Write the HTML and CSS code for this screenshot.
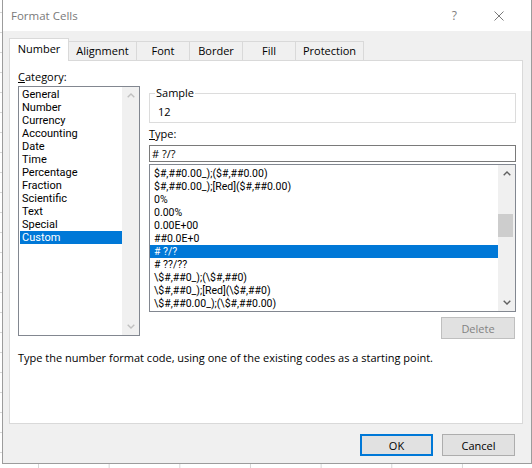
FILE: index.html
```html
<!DOCTYPE html>
<html>
<head>
<meta charset="utf-8">
<title>Format Cells</title>
<link rel="stylesheet" href="styles.css">
</head>
<body>
<div class="dialog">
  <div class="titlebar">
    <span class="title">Format Cells</span>
    <span class="help">?</span>
    <svg class="close" width="10" height="10" viewBox="0 0 10 10"><path d="M0.5 0.5 L9.5 9.5 M9.5 0.5 L0.5 9.5" stroke="#7a7a7a" stroke-width="1" fill="none"/></svg>
  </div>
  <div class="client">
    <div class="tabs">
      <div class="tab active">Number</div>
      <div class="tab wide">Alignment</div>
      <div class="tab">Font</div>
      <div class="tab">Border</div>
      <div class="tab">Fill</div>
      <div class="tab wide">Protection</div>
    </div>
    <div class="panel">
      <div class="cols">
        <div class="catcol">
          <div class="label"><u>C</u>ategory:</div>
          <div class="listbox cat">
            <ul class="items">
              <li>General</li>
              <li>Number</li>
              <li>Currency</li>
              <li>Accounting</li>
              <li>Date</li>
              <li>Time</li>
              <li>Percentage</li>
              <li>Fraction</li>
              <li>Scientific</li>
              <li>Text</li>
              <li>Special</li>
              <li class="sel">Custom</li>
            </ul>
            <div class="vscroll disabled">
              <div class="arrow"><svg width="8" height="5" viewBox="0 0 8 5"><path d="M0.7 4.3 L4 1 L7.3 4.3" fill="none" stroke-width="1.4"/></svg></div>
              <div class="track"></div>
              <div class="arrow"><svg width="8" height="5" viewBox="0 0 8 5"><path d="M0.7 0.7 L4 4 L7.3 0.7" fill="none" stroke-width="1.4"/></svg></div>
            </div>
          </div>
        </div>
        <div class="rightcol">
          <fieldset class="sample">
            <legend>Sample</legend>
            <div class="value">12</div>
          </fieldset>
          <div class="label typelabel"><u>T</u>ype:</div>
          <div class="input"># ?/?</div>
          <div class="listbox types">
            <ul class="items">
              <li>$#,##0.00_);($#,##0.00)</li>
              <li>$#,##0.00_);[Red]($#,##0.00)</li>
              <li>0%</li>
              <li>0.00%</li>
              <li>0.00E+00</li>
              <li>##0.0E+0</li>
              <li class="sel"># ?/?</li>
              <li># ??/??</li>
              <li>\$#,##0_);(\$#,##0)</li>
              <li>\$#,##0_);[Red](\$#,##0)</li>
              <li>\$#,##0.00_);(\$#,##0.00)</li>
            </ul>
            <div class="vscroll">
              <div class="arrow"><svg width="8" height="5" viewBox="0 0 8 5"><path d="M0.7 4.3 L4 1 L7.3 4.3" fill="none" stroke-width="1.4"/></svg></div>
              <div class="track"><div class="thumb"></div></div>
              <div class="arrow"><svg width="8" height="5" viewBox="0 0 8 5"><path d="M0.7 0.7 L4 4 L7.3 0.7" fill="none" stroke-width="1.4"/></svg></div>
            </div>
          </div>
          <div class="delrow"><button class="btn disabled">Delete</button></div>
        </div>
      </div>
      <p class="desc">Type the number format code, using one of the existing codes as a starting point.</p>
    </div>
    <div class="buttons">
      <button class="btn default">OK</button>
      <button class="btn">Cancel</button>
    </div>
  </div>
</div>
</body>
</html>
```
FILE: styles.css
```css
* { box-sizing: border-box; }
html, body { margin: 0; padding: 0; }
body {
  width: 532px;
  height: 468px;
  overflow: hidden;
  position: relative;
  background-color: #ffffff;
  background-image:
    linear-gradient(to right, #d6d6d6 1px, transparent 1px),
    linear-gradient(to bottom, #d6d6d6 1px, transparent 1px);
  background-size: 70.67px 100%, 100% 20px;
  background-position: 38px 0, 0 12px;
  font-family: "Open Sans", "Noto Sans", sans-serif;
  font-size: 11px;
  color: #000;
}
.dialog {
  position: absolute;
  left: 2px;
  top: 0;
  width: 530px;
  height: 464px;
  border: 1px solid #9c9c9c;
  border-top: none;
  background: #f0f0f0;
  display: flex;
  flex-direction: column;
}
.titlebar {
  height: 31px;
  background: #ffffff;
  display: flex;
  align-items: center;
  padding-left: 8px;
  color: #7a7a7a;
  flex: none;
}
.title { flex: 1; line-height: 16px; font-size: 11.5px; }
.help { font-size: 12px; line-height: 16px; margin-right: 37px; color: #808080; }
.close { margin-right: 27px; display: block; }
.client {
  flex: 1;
  padding: 7px 8px 0 6px;
  display: flex;
  flex-direction: column;
}
.tabs {
  display: flex;
  align-items: flex-end;
  height: 22px;
  flex: none;
}
.tab {
  width: 53px;
  height: 19px;
  border: 1px solid #d9d9d9;
  border-left: none;
  border-bottom: none;
  text-align: center;
  line-height: 18px;
  white-space: nowrap;
}
.tab.wide { width: 68px; }
.tab.active {
  width: 60px;
  height: 23px;
  margin-bottom: -1px;
  background: #ffffff;
  border-left: 1px solid #d9d9d9;
  line-height: 20px;
  position: relative;
  z-index: 1;
}
.panel {
  height: 364px;
  background: #ffffff;
  border: 1px solid #d9d9d9;
  padding: 8px 6px 0 8px;
  flex: none;
}
.cols { display: flex; gap: 9px; }
.catcol { width: 122px; flex: none; }
.label { line-height: 16px; height: 16px; }
.listbox {
  border: 1px solid #828790;
  display: flex;
  background: #fff;
}
.listbox.cat { margin-top: 1px; height: 250px; }
.items {
  flex: 1;
  list-style: none;
  margin: 0;
  padding: 1px 0 0 1px;
  overflow: hidden;
  font-family: Roboto, "Open Sans", sans-serif;
  font-size: 11px;
}
.items li {
  height: 13px;
  line-height: 13px;
  padding-left: 2px;
  white-space: nowrap;
}
.items li.sel { background: #0078d7; color: #ffffff; }
.vscroll {
  width: 17px;
  flex: none;
  background: #f0f0f0;
  display: flex;
  flex-direction: column;
}
.arrow {
  height: 17px;
  display: flex;
  align-items: center;
  justify-content: center;
}
.arrow svg { display: block; stroke: #606060; }
.vscroll.disabled .arrow svg { stroke: #c0c0c0; }
.track { flex: 1; padding-top: 32px; }
.thumb { height: 23px; margin: 0 2px 0 0; background: #cdcdcd; }
.rightcol { width: 367px; flex: none; display: flex; flex-direction: column; }
.sample {
  margin: 16px 0 0 0;
  padding: 3px 5px 2px 5px;
  border: 1px solid #dcdcdc;
  min-width: 0;
}
.sample legend { padding: 0 1px; line-height: 16px; }
.value { padding-left: 3px; line-height: 16px; }
.typelabel { margin-top: 3px; }
.input {
  margin-top: 3px;
  height: 17px;
  border: 1px solid #7a7a7a;
  padding-left: 2px;
  line-height: 15px;
}
.listbox.types { margin-top: 2px; height: 148px; }
.types .items { padding: 2px 0 0 0; font-size: 10.5px; }
.types .items li { padding-left: 4px; }
.delrow { display: flex; justify-content: flex-end; margin-top: 5px; padding-right: 1px; }
.btn {
  height: 22px;
  width: 73px;
  background: #e1e1e1;
  border: 1px solid #adadad;
  font-family: inherit;
  font-size: 11px;
  color: #000;
  padding: 0;
  margin: 0;
}
.btn.disabled { width: 74px; color: #838383; border-color: #bfbfbf; }
.btn.default { border: 2px solid #0078d7; }
.desc { margin: 11px 0 0 0; line-height: 16px; }
.buttons {
  display: flex;
  justify-content: flex-end;
  gap: 9px;
  margin-top: 10px;
  padding-right: 8px;
}
```
